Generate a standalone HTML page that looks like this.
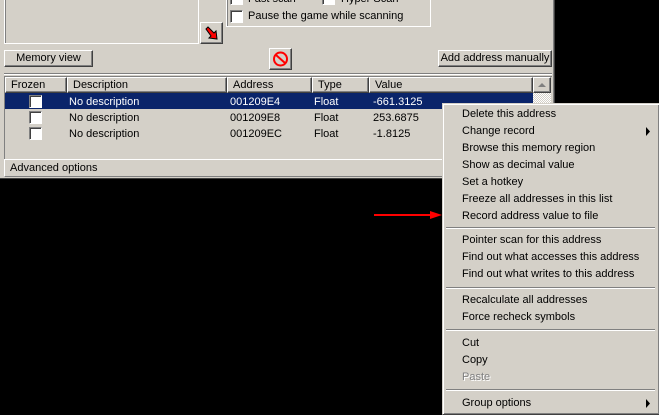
<!DOCTYPE html>
<html><head><style>
*{margin:0;padding:0;box-sizing:border-box}
body{width:659px;height:415px;background:#000;position:relative;overflow:hidden;font-family:"Liberation Sans",sans-serif;font-size:11px;color:#000}
.a{position:absolute}
.win{left:0;top:0;width:555px;height:179px;background:#d4d0c8;border-right:1px solid #404040;border-bottom:1px solid #404040}
.win:after{content:"";position:absolute;right:0;top:0;bottom:0;width:1px;background:#808080}
.btn{position:absolute;background:#d4d0c8;border:1px solid;border-color:#fff #404040 #404040 #fff;box-shadow:inset -1px -1px 0 #808080;text-align:center;line-height:14px}
.grp{position:absolute;border:1px solid #fff;box-shadow:inset 1px 1px 0 #808080}
.cb{position:absolute;width:13px;height:13px;background:#fff;border:1px solid;border-color:#808080 #fff #fff #808080;box-shadow:inset 1px 1px 0 #404040}
.t{position:absolute;white-space:nowrap;line-height:13px}
.hd{position:absolute;top:77px;height:16px;border:1px solid;border-color:#fff #404040 #404040 #fff;box-shadow:inset -1px -1px 0 #808080;padding-left:5px;line-height:15px}
.menu{left:442px;top:103px;width:218px;height:312px;background:#d4d0c8;border:1px solid;border-color:#d4d0c8 #404040 #404040 #d4d0c8;box-shadow:inset 1px 1px 0 #fff,inset -1px -1px 0 #808080}
.mi{position:absolute;left:19px;white-space:nowrap;line-height:13px}
.sep{position:absolute;left:3px;right:4px;height:2px;border-top:1px solid #808080;border-bottom:1px solid #fff}
</style></head><body>
<div class="a win">
  <div class="grp" style="left:4px;top:-2px;width:195px;height:46px"></div>
  <div class="btn" style="left:200px;top:22px;width:23px;height:22px">
    <svg width="21" height="20" viewBox="0 0 21 20"><path d="M5 6 L7 4 L13 10 L15 8 L16 16 L8 15 L10 13 Z" fill="#f00" stroke="#000" stroke-width="1"/></svg>
  </div>
  <div class="grp" style="left:226px;top:-2px;width:205px;height:29px"></div>
  <div class="cb" style="left:230px;top:-8px"></div><div class="t" style="left:248px;top:-7px">Fast scan</div>
  <div class="cb" style="left:322px;top:-8px"></div><div class="t" style="left:341px;top:-7px">Hyper Scan</div>
  <div class="cb" style="left:230px;top:10px"></div><div class="t" style="left:248px;top:10px">Pause the game while scanning</div>
  <div class="btn" style="left:4px;top:50px;width:89px;height:17px">Memory view</div>
  <div class="btn" style="left:269px;top:48px;width:23px;height:22px">
    <svg width="21" height="20" viewBox="0 0 21 20"><circle cx="10.5" cy="10" r="6.5" fill="none" stroke="#f00" stroke-width="2"/><line x1="6" y1="6" x2="15" y2="14" stroke="#f00" stroke-width="2"/></svg>
  </div>
  <div class="btn" style="left:438px;top:50px;width:114px;height:17px">Add address manually</div>
  <div class="a" style="left:4px;top:73px;width:548px;height:2px;border-top:1px solid #808080;border-bottom:1px solid #fff"></div>
  <div class="a" style="left:4px;top:76px;width:548px;height:83px;background:#d4d0c8;border-top:1px solid #808080;border-left:1px solid #808080"></div>
  <div class="hd" style="left:5px;width:62px">Frozen</div>
  <div class="hd" style="left:67px;width:160px">Description</div>
  <div class="hd" style="left:227px;width:85px">Address</div>
  <div class="hd" style="left:312px;width:57px">Type</div>
  <div class="hd" style="left:369px;width:164px">Value</div>
  <div class="hd" style="left:533px;width:18px;padding:0"><svg width="16" height="14"><path d="M4 9 L8 5 L12 9 Z" fill="#808080"/></svg></div>
  <div class="a" style="left:533px;top:93px;width:18px;height:65px;background:repeating-conic-gradient(#fff 0 25%,#d4d0c8 0 50%) 0 0/2px 2px"></div>
  <div class="a" style="left:5px;top:93px;width:528px;height:16px;background:#0a246a"></div>
  <div class="cb" style="left:29px;top:95px"></div><div class="t" style="left:69px;top:96px;color:#fff">No description</div><div class="t" style="left:230px;top:96px;color:#fff">001209E4</div><div class="t" style="left:314px;top:96px;color:#fff">Float</div><div class="t" style="left:373px;top:96px;color:#fff">-661.3125</div>
  <div class="cb" style="left:29px;top:111px"></div><div class="t" style="left:69px;top:112px">No description</div><div class="t" style="left:230px;top:112px">001209E8</div><div class="t" style="left:314px;top:112px">Float</div><div class="t" style="left:373px;top:112px">253.6875</div>
  <div class="cb" style="left:29px;top:127px"></div><div class="t" style="left:69px;top:128px">No description</div><div class="t" style="left:230px;top:128px">001209EC</div><div class="t" style="left:314px;top:128px">Float</div><div class="t" style="left:373px;top:128px">-1.8125</div>
  <div class="a" style="left:4px;top:159px;width:548px;height:18px;border:1px solid;border-color:#fff #808080 #808080 #fff"></div>
  <div class="t" style="left:10px;top:162px">Advanced options</div>
</div>
<svg class="a" style="left:374px;top:210px" width="70" height="10"><line x1="0" y1="5" x2="58" y2="5" stroke="#f00" stroke-width="2"/><path d="M56 1 L68 5 L56 9 Z" fill="#f00"/></svg>
<div class="a menu">
  <div class="mi" style="top:4px">Delete this address</div>
  <div class="mi" style="top:21px">Change record</div><svg class="a" style="left:203px;top:23px" width="5" height="9"><path d="M0 0 L4 4.5 L0 9Z"/></svg>
  <div class="mi" style="top:38px">Browse this memory region</div>
  <div class="mi" style="top:55px">Show as decimal value</div>
  <div class="mi" style="top:72px">Set a hotkey</div>
  <div class="mi" style="top:89px">Freeze all addresses in this list</div>
  <div class="mi" style="top:106px">Record address value to file</div>
  <div class="sep" style="top:123px"></div>
  <div class="mi" style="top:130px">Pointer scan for this address</div>
  <div class="mi" style="top:147px">Find out what accesses this address</div>
  <div class="mi" style="top:164px">Find out what writes to this address</div>
  <div class="sep" style="top:183px"></div>
  <div class="mi" style="top:190px">Recalculate all addresses</div>
  <div class="mi" style="top:207px">Force recheck symbols</div>
  <div class="sep" style="top:225px"></div>
  <div class="mi" style="top:233px">Cut</div>
  <div class="mi" style="top:250px">Copy</div>
  <div class="mi" style="top:267px;color:#808080;text-shadow:1px 1px 0 #fff">Paste</div>
  <div class="sep" style="top:285px"></div>
  <div class="mi" style="top:293px">Group options</div><svg class="a" style="left:203px;top:295px" width="5" height="9"><path d="M0 0 L4 4.5 L0 9Z"/></svg>
</div>
</body></html>
